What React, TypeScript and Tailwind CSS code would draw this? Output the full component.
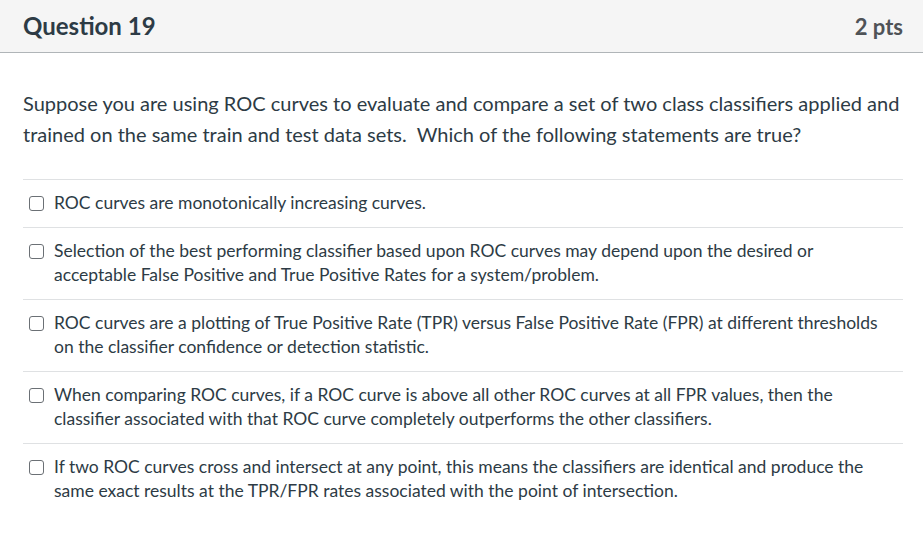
import React from "react";

const answers = [
  "ROC curves are monotonically increasing curves.",
  "Selection of the best performing classifier based upon ROC curves may depend upon the desired or acceptable False Positive and True Positive Rates for a system/problem.",
  "ROC curves are a plotting of True Positive Rate (TPR) versus False Positive Rate (FPR) at different thresholds on the classifier confidence or detection statistic.",
  "When comparing ROC curves, if a ROC curve is above all other ROC curves at all FPR values, then the classifier associated with that ROC curve completely outperforms the other classifiers.",
  "If two ROC curves cross and intersect at any point, this means the classifiers are identical and produce the same exact results at the TPR/FPR rates associated with the point of intersection.",
];

export default function App() {
  return (
    <div
      className="w-[923px] h-[535px] bg-white text-[#2d3b45] overflow-hidden"
      style={{ fontFamily: "Lato, 'Liberation Sans', sans-serif" }}
    >
      <div className="h-[53px] bg-[#f5f5f5] border-b border-[#b0b5b8] flex items-center justify-between pl-[23px] pr-[20px]">
        <div className="text-[24px] font-bold text-[#2d3b45]">Question 19</div>
        <div className="text-[22px] font-bold text-[#4f5357]">2 pts</div>
      </div>
      <div className="pl-[23px] pr-[20px]">
        <p className="pt-[35px] text-[20px] leading-[31px] pb-[29px]">
          Suppose you are using ROC curves to evaluate and compare a set of two class classifiers applied and trained on the same train and test data sets.&nbsp; Which of the following statements are true?
        </p>
        <div>
          {answers.map((a, i) => (
            <div key={i} className="border-t border-[#dfe1e3] flex items-start pt-[10.5px] pb-[12.5px] pl-[6px]">
              <div className="w-[15px] h-[15px] mt-[5px] rounded-[3px] border border-[#6b7075] bg-white shrink-0" />
              <div className="ml-[10px] text-[17.5px] leading-6 pr-4">{a}</div>
            </div>
          ))}
        </div>
      </div>
    </div>
  );
}
